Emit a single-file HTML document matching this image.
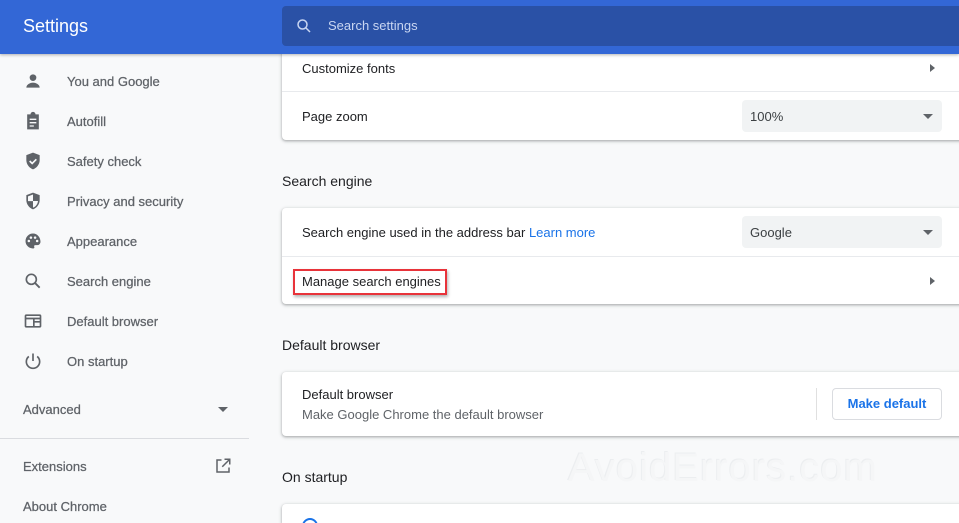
<!DOCTYPE html>
<html><head><style>
*{margin:0;padding:0;box-sizing:border-box}
html{width:959px;height:523px;overflow:hidden}
body{width:959px;height:523px;overflow:hidden;background:#f8f9fa;font-family:"Liberation Sans",Arial,sans-serif;position:relative;color:#202124}
.hdr{position:absolute;left:0;top:0;width:959px;height:54px;background:#3367d6;box-shadow:0 1px 3px rgba(0,0,0,.3);z-index:5}
.hdr .t{position:absolute;left:23px;top:16px;color:#fff;font-size:18px}
.sb{position:absolute;left:282px;top:6px;width:677px;height:40px;background:#2a51a6;border-radius:4px 0 0 4px}
.sb span{position:absolute;left:46px;top:12px;color:#c9d6f2;font-size:13px}
.nav{position:absolute;left:0;font-size:13px;color:#5f6368;font-weight:normal;-webkit-text-stroke:0.25px #5f6368}
.nav svg{position:absolute;left:23px;top:-3px}
.nav span{position:absolute;left:67px;top:0;white-space:nowrap}
.card{position:absolute;left:282px;width:690px;background:#fff;border-radius:4px;box-shadow:0 1px 2px rgba(60,64,67,.3),0 1px 3px 1px rgba(60,64,67,.15)}
.row{position:absolute;left:20px;font-size:13px;color:#202124;white-space:nowrap}
.div{position:absolute;left:0;width:100%;height:1px;background:#e8eaed}
.sel{position:absolute;left:460px;width:200px;height:32px;background:#f1f3f4;border-radius:4px;font-size:13px;color:#3c4043;padding:9px 8px}
.sel:after{content:"";position:absolute;right:9px;top:14px;border:5px solid transparent;border-top:5px solid #5f6368}
.arr{position:absolute;left:648px;width:0;height:0;border:4px solid transparent;border-left:5px solid #5f6368}
.sec{position:absolute;left:282px;font-size:14px;color:#202124}
</style></head><body>
<div class="hdr"><div class="t">Settings</div>
<div class="sb"><svg style="position:absolute;left:13px;top:11px" width="18" height="18" viewBox="0 0 24 24"><circle cx="10" cy="10" r="6" fill="none" stroke="#c9d6f2" stroke-width="2"/><path d="M14.5 14.5L20 20" stroke="#c9d6f2" stroke-width="2"/></svg><span>Search settings</span></div></div>

<div class="nav" style="top:74px"><svg width="20" height="20" viewBox="0 0 24 24" fill="#5f6368"><circle cx="12" cy="8" r="4"/><path d="M4 20c0-4 5-6 8-6s8 2 8 6z"/></svg><span>You and Google</span></div>
<div class="nav" style="top:114px"><svg width="20" height="20" viewBox="0 0 24 24" fill="#5f6368"><path d="M5 4h4a3 3 0 016 0h4v18H5z"/><path d="M8 10h8M8 14h8M8 18h5" stroke="#f8f9fa" stroke-width="1.6"/></svg><span>Autofill</span></div>
<div class="nav" style="top:154px"><svg width="20" height="20" viewBox="0 0 24 24" fill="#5f6368"><path d="M12 2l8 3v6c0 5-3.5 9.5-8 11-4.5-1.5-8-6-8-11V5z"/><path d="M8 12l3 3 5-5" stroke="#f8f9fa" stroke-width="2" fill="none"/></svg><span>Safety check</span></div>
<div class="nav" style="top:194px"><svg width="20" height="20" viewBox="0 0 24 24" fill="#5f6368"><path d="M12 2l8 3v6c0 5-3.5 9.5-8 11-4.5-1.5-8-6-8-11V5z"/><path d="M12 4.2v8H6V6.4zM12 12h6c-.5 4-3 7-6 8z" fill="#f8f9fa"/></svg><span>Privacy and security</span></div>
<div class="nav" style="top:234px"><svg width="20" height="20" viewBox="0 0 24 24" fill="#5f6368"><path d="M12 3a9 9 0 000 18c1.5 0 2-1 1.5-2s0-2 1.5-2h2a4 4 0 004-4c0-5.5-4-10-9-10z"/><circle cx="7" cy="12" r="1.5" fill="#f8f9fa"/><circle cx="9.5" cy="8" r="1.5" fill="#f8f9fa"/><circle cx="14.5" cy="8" r="1.5" fill="#f8f9fa"/><circle cx="17" cy="12" r="1.5" fill="#f8f9fa"/></svg><span>Appearance</span></div>
<div class="nav" style="top:274px"><svg width="20" height="20" viewBox="0 0 24 24"><circle cx="10" cy="10" r="6" fill="none" stroke="#5f6368" stroke-width="2"/><path d="M14.5 14.5L20 20" stroke="#5f6368" stroke-width="2.2"/></svg><span>Search engine</span></div>
<div class="nav" style="top:314px"><svg width="20" height="20" viewBox="0 0 24 24"><rect x="3" y="5" width="18" height="14" rx="1" fill="none" stroke="#5f6368" stroke-width="2"/><path d="M3 9h18M13 9v10M13 13h8" stroke="#5f6368" stroke-width="2"/></svg><span>Default browser</span></div>
<div class="nav" style="top:354px"><svg width="20" height="20" viewBox="0 0 24 24" fill="none" stroke="#5f6368" stroke-width="2"><path d="M12 3v9"/><path d="M7 6.5a8 8 0 1010 0"/></svg><span>On startup</span></div>
<div class="nav" style="top:402px"><span style="left:23px">Advanced</span></div>
<div style="position:absolute;left:218px;top:407px;border:5px solid transparent;border-top:5px solid #5f6368"></div>
<div style="position:absolute;left:0;top:438px;width:249px;height:1px;background:#dadce0"></div>
<div class="nav" style="top:459px"><span style="left:23px">Extensions</span></div>
<svg style="position:absolute;left:214px;top:457px" width="18" height="18" viewBox="0 0 24 24" fill="none" stroke="#5f6368" stroke-width="2"><path d="M10 4H4v16h16v-6M14 3h7v7M21 3L11 13"/></svg>
<div class="nav" style="top:499px"><span style="left:23px">About Chrome</span></div>

<div class="card" style="top:40px;height:100px">
<div class="row" style="top:21px">Customize fonts</div><div class="arr" style="top:24px"></div>
<div class="div" style="top:51px"></div>
<div class="row" style="top:69px">Page zoom</div><div class="sel" style="top:60px">100%</div>
</div>
<div class="sec" style="top:173px">Search engine</div>
<div class="card" style="top:208px;height:96px">
<div class="row" style="top:17px">Search engine used in the address bar <span style="color:#1a73e8">Learn more</span></div>
<div class="sel" style="top:8px">Google</div>
<div class="div" style="top:48px"></div>
<div class="row" style="top:66px">Manage search engines</div><div class="arr" style="top:69px"></div>
<div style="position:absolute;left:11px;top:61px;width:154px;height:26px;border:2px solid #e8333a;box-shadow:1px 2px 3px rgba(0,0,0,.3)"></div>
</div>
<div class="sec" style="top:337px">Default browser</div>
<div class="card" style="top:372px;height:64px">
<div class="row" style="top:15px">Default browser</div>
<div class="row" style="top:35px;color:#5f6368">Make Google Chrome the default browser</div>
<div style="position:absolute;left:534px;top:16px;width:1px;height:32px;background:#e0e0e0"></div>
<div style="position:absolute;left:550px;top:16px;width:110px;height:32px;border:1px solid #dadce0;border-radius:4px;color:#1a73e8;font-size:13px;font-weight:bold;text-align:center;line-height:30px">Make default</div>
</div>
<div style="position:absolute;left:568px;top:446px;font-size:40px;color:#f5f6f7;letter-spacing:1px;text-shadow:-1px -1px 0 #eceef0">AvoidErrors.com</div>
<div class="sec" style="top:469px">On startup</div>
<div class="card" style="top:504px;height:19px;border-radius:4px 0 0 0"><div style="position:absolute;left:20px;top:14px;width:16px;height:16px;border:2px solid #1a73e8;border-radius:50%"></div></div>
</body></html>
